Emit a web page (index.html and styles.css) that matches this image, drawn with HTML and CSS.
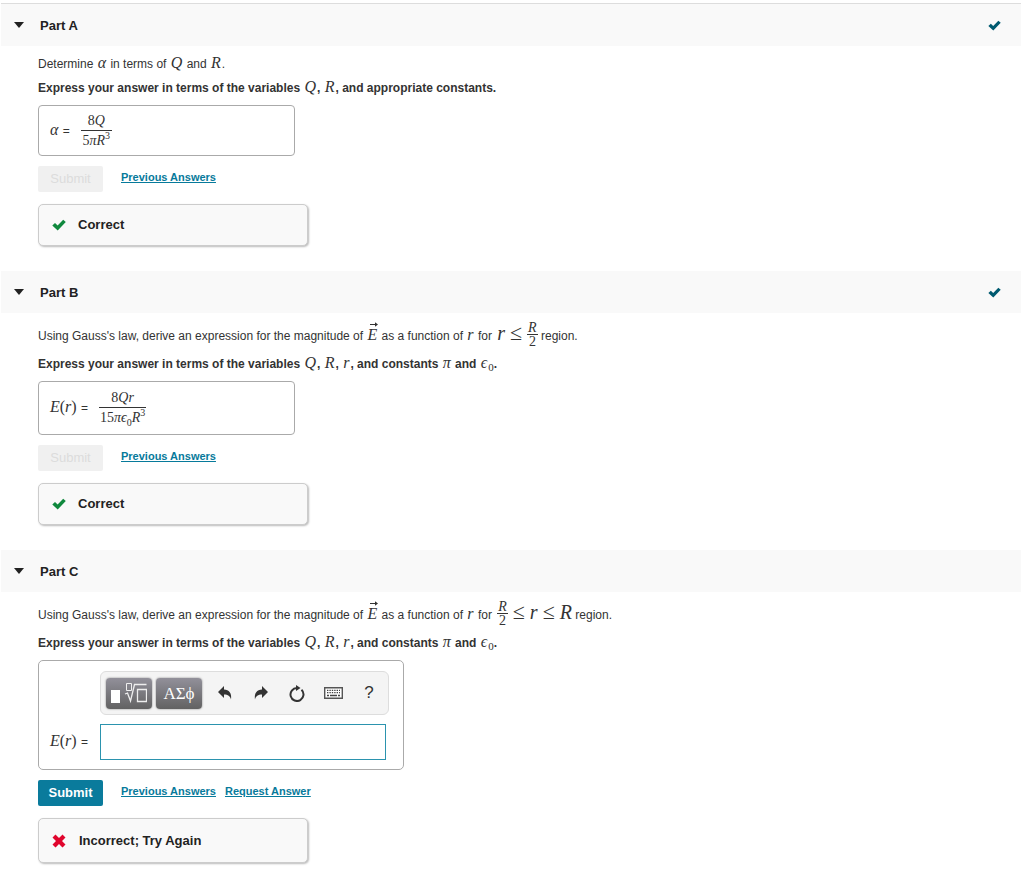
FILE: index.html
```html
<!DOCTYPE html>
<html lang="en">
<head>
<meta charset="utf-8">
<meta name="viewport" content="width=device-width, initial-scale=1">
<title>Gauss's law problem</title>
<link rel="stylesheet" href="styles.css">
</head>
<body>
<svg class="defs" aria-hidden="true">
  <symbol id="check" viewBox="0 0 14 12"><path d="M.3 6.500 3 4 5.600 6.500 11.200.8l2.600 2.300L5.700 11.400z"/></symbol>
  <symbol id="vector" viewBox="0 0 8 5"><path d="M0 2h5V.3L8 2.500 5 4.700V3H0z"/></symbol>
</svg>
<main>
  <section class="part">
    <header class="part-head first">
      <button class="toggle" aria-label="Collapse Part A"><svg viewBox="0 0 10 6"><path d="M0 0h10L5 6z"/></svg></button>
      <h2>Part A</h2>
      <svg class="done"><use href="#check"/></svg>
    </header>
    <div class="part-body">
      <p class="prompt">Determine <i class="m">α</i> in terms of <i class="m">Q</i> and <i class="m">R</i>.</p>
      <p class="instruct">Express your answer in terms of the variables <i class="m">Q</i>, <i class="m">R</i>, and appropriate constants.</p>
      <div class="answer">
        <span class="lhs"><i class="m">α</i> =</span>
        <span class="frac"><span class="num">8<i>Q</i></span><span class="den">5<i>πR</i><sup>3</sup></span></span>
      </div>
      <div class="actions"><button class="submit" disabled>Submit</button><a href="#">Previous Answers</a></div>
      <div class="feedback"><svg class="ok"><use href="#check"/></svg>Correct</div>
    </div>
  </section>

  <section class="part">
    <header class="part-head">
      <button class="toggle" aria-label="Collapse Part B"><svg viewBox="0 0 10 6"><path d="M0 0h10L5 6z"/></svg></button>
      <h2>Part B</h2>
      <svg class="done"><use href="#check"/></svg>
    </header>
    <div class="part-body">
      <p class="prompt tall">Using Gauss's law, derive an expression for the magnitude of <i class="m vec">E<svg><use href="#vector"/></svg></i> as a function of <i class="m">r</i> for <span class="rel"><i>r</i> <b>≤</b> <span class="frac small"><i class="num">R</i><span class="den">2</span></span></span> region.</p>
      <p class="instruct close">Express your answer in terms of the variables <i class="m">Q</i>, <i class="m">R</i>, <i class="m">r</i>, and constants <i class="m">π</i> and <i class="m">ϵ</i><span class="sub">0</span>.</p>
      <div class="answer deep">
        <span class="lhs"><span class="m"><i>E</i>(<i>r</i>)</span> =</span>
        <span class="frac"><span class="num">8<i>Qr</i></span><span class="den">15<i>πϵ</i><sub>0</sub><i>R</i><sup>3</sup></span></span>
      </div>
      <div class="actions"><button class="submit" disabled>Submit</button><a href="#">Previous Answers</a></div>
      <div class="feedback"><svg class="ok"><use href="#check"/></svg>Correct</div>
    </div>
  </section>

  <section class="part">
    <header class="part-head">
      <button class="toggle" aria-label="Collapse Part C"><svg viewBox="0 0 10 6"><path d="M0 0h10L5 6z"/></svg></button>
      <h2>Part C</h2>
    </header>
    <div class="part-body">
      <p class="prompt tall">Using Gauss's law, derive an expression for the magnitude of <i class="m vec">E<svg><use href="#vector"/></svg></i> as a function of <i class="m">r</i> for <span class="rel"><span class="frac small"><i class="num">R</i><span class="den">2</span></span> <b>≤</b> <i>r</i> <b>≤</b> <i>R</i></span> region.</p>
      <p class="instruct close">Express your answer in terms of the variables <i class="m">Q</i>, <i class="m">R</i>, <i class="m">r</i>, and constants <i class="m">π</i> and <i class="m">ϵ</i><span class="sub">0</span>.</p>
      <div class="editor">
        <div class="toolbar">
          <button class="palette" aria-label="Templates"><svg width="36" height="22" viewBox="0 0 36 22"><path fill="#fff" d="M0 8h9v13H0z"/><path fill="none" stroke="#eee" d="M15.500 1.500h5v7h-5z"/><path fill="none" stroke="#eee" stroke-width="1.300" d="M14 12l2.500-1 3 8 4-16.500h12M26.500 7.500h9v12h-9z"/></svg></button>
          <button class="palette greek">ΑΣϕ</button>
          <button class="tool" aria-label="Undo"><svg width="14" height="14" viewBox="0 0 14 14"><path d="M6 0v3.500c5 .2 8 3.500 7 10-.8-3.500-3-5-7-5V12L0 6z"/></svg></button>
          <button class="tool" aria-label="Redo"><svg width="14" height="14" viewBox="0 0 14 14"><path d="M8 0v3.500c-5 .2-8 3.500-7 10 .8-3.500 3-5 7-5V12l6-6z"/></svg></button>
          <button class="tool" aria-label="Reset"><svg width="16" height="17" viewBox="0 0 16 17"><path fill="none" stroke="#333" stroke-width="2" d="M12.500 4.800A6.500 6.500 0 1 1 8 3"/><path d="M7 0 11.500 3 7 6z"/></svg></button>
          <button class="tool" aria-label="Keyboard"><svg width="19" height="12" viewBox="0 0 19 12"><path fill="#fff" stroke="#555" stroke-width="1.400" d="M.7.7h17.600v10.600H.7z"/><path fill="none" stroke="#444" stroke-width="1.300" stroke-dasharray="1.400 1" d="M3 3.300h13M3 5.700h13"/><path stroke="#444" stroke-width="1.300" d="M3 8.500h2M6 8.500h7M14 8.500h2"/></svg></button>
          <button class="tool help" aria-label="Help">?</button>
        </div>
        <label class="lhs" for="ans"><span class="m"><i>E</i>(<i>r</i>)</span> =</label>
        <input id="ans" type="text">
      </div>
      <div class="actions"><button class="submit">Submit</button><a href="#">Previous Answers</a><a href="#">Request Answer</a></div>
      <div class="feedback wrong"><svg class="bad" viewBox="0 0 14 14"><path d="M3.500.5 7 4 10.500.5l3 3L10 7l3.500 3.500-3 3L7 10l-3.500 3.500-3-3L4 7 .5 3.500z"/></svg>Incorrect; Try Again</div>
    </div>
  </section>
</main>
</body>
</html>
```
FILE: styles.css
```css
* { box-sizing: border-box; }
body {
  margin: 0;
  padding: 3px 3px 0 1px;
  background: #fff;
  color: #333;
  font: 12px/24px "Liberation Sans", Arial, sans-serif;
}
button { font: inherit; border: 0; padding: 0; cursor: pointer; }
p, h2 { margin: 0; }
.defs { position: absolute; width: 0; height: 0; }

.part-head {
  display: flex;
  align-items: center;
  height: 42px;
  padding: 0 20px 0 13px;
  background: #f9f9f9;
}
.part-head.first { height: 43px; border-top: 1px solid #ddd; }
.part-head h2 { flex: 1; padding-top: 1px; font-size: 13px; font-weight: bold; color: #222; }
.toggle { width: 26px; height: 20px; background: none; display: flex; align-items: center; }
.toggle svg { width: 10px; height: 6px; fill: #222; }
.done { width: 13px; height: 11px; fill: #005a70; }
.part-body { padding: 6px 0 25px 37px; }

.prompt, .instruct { height: 24px; white-space: nowrap; }
.prompt.tall { height: 35px; line-height: 34px; }
.instruct { font-weight: bold; margin-bottom: 5px; }
.instruct.close { line-height: 20px; height: 20px; margin-bottom: 7px; }
.m, .frac, .rel { font-family: "Liberation Serif", "Times New Roman", serif; font-weight: normal; }
.m { font-size: 16px; line-height: 1; padding: 0 1px; }
.sub { font: 11px/1 "Liberation Serif", serif; vertical-align: -3px; }
.rel { font-size: 20px; line-height: 1; padding-left: 2px; }
.rel b { font-weight: normal; font-size: 22px; }
.vec { position: relative; }
.vec svg { position: absolute; left: 4px; top: -4px; width: 8px; height: 5px; fill: #333; }

.frac { display: inline-flex; flex-direction: column; align-items: center; font-size: 14px; line-height: 18px; }
.frac .num { padding: 0 7px; }
.frac .den { align-self: stretch; border-top: 1px solid #333; text-align: center; padding: 1px 1px 0; }
.frac sup, .frac sub { font-size: 10px; line-height: 0; }
.frac.small { vertical-align: middle; line-height: 12px; }
.frac.small .num { padding: 0 1px; }

.answer {
  display: flex;
  align-items: center;
  gap: 11px;
  width: 257px;
  height: 51px;
  padding: 0 10px;
  border: 1px solid #aaa;
  border-radius: 4px;
}
.answer.deep { height: 54px; }
.lhs { white-space: nowrap; }

.actions { display: flex; align-items: flex-start; margin: 10px 0 12px; height: 26px; }
.submit {
  width: 65px;
  height: 26px;
  margin-right: 18px;
  border-radius: 2px;
  background: #0a7b9c;
  color: #fff;
  font-size: 13px;
  font-weight: bold;
}
.submit:disabled { background: #f0f0f0; color: #dcdcdc; font-weight: normal; }
.actions a { margin-right: 9px; color: #077a9b; font-size: 11px; font-weight: bold; line-height: 22px; }

.feedback {
  display: flex;
  align-items: center;
  width: 270px;
  height: 42px;
  padding-left: 13px;
  border: 1px solid #ccc;
  border-radius: 5px;
  box-shadow: 1px 1px 2px #bbb;
  background: #f9f9f9;
  color: #222;
  font-size: 13px;
  font-weight: bold;
}
.feedback.wrong { height: 45px; }
.ok { width: 14px; height: 12px; margin-right: 12px; fill: #10893e; }
.bad { width: 14px; height: 14px; margin-right: 13px; fill: #e0052d; }

.editor {
  display: grid;
  grid-template-columns: 51px 1fr;
  align-items: center;
  row-gap: 9px;
  width: 366px;
  padding: 10px 14px 9px 10px;
  border: 1px solid #aaa;
  border-radius: 5px;
}
.toolbar {
  grid-column: 2;
  display: flex;
  align-items: center;
  height: 44px;
  padding-left: 5px;
  border: 1px solid #ddd;
  border-radius: 6px;
  background: #f4f4f4;
}
.palette {
  display: flex;
  align-items: center;
  justify-content: center;
  width: 46px;
  height: 31px;
  margin-right: 4px;
  border-radius: 4px;
  background: linear-gradient(#92909a, #626262);
  box-shadow: 0 0 2px #777;
  color: #fff;
}
.greek { font: 17px/1 "Liberation Serif", serif; margin-right: 5px; }
.tool { display: flex; align-items: center; justify-content: center; width: 36px; height: 30px; background: none; }
.tool svg { fill: #333; }
.help { font-size: 17px; color: #333; }
.editor input {
  width: 286px;
  height: 36px;
  border: 1px solid #2b93ae;
  background: #fff;
  font: inherit;
}
```
